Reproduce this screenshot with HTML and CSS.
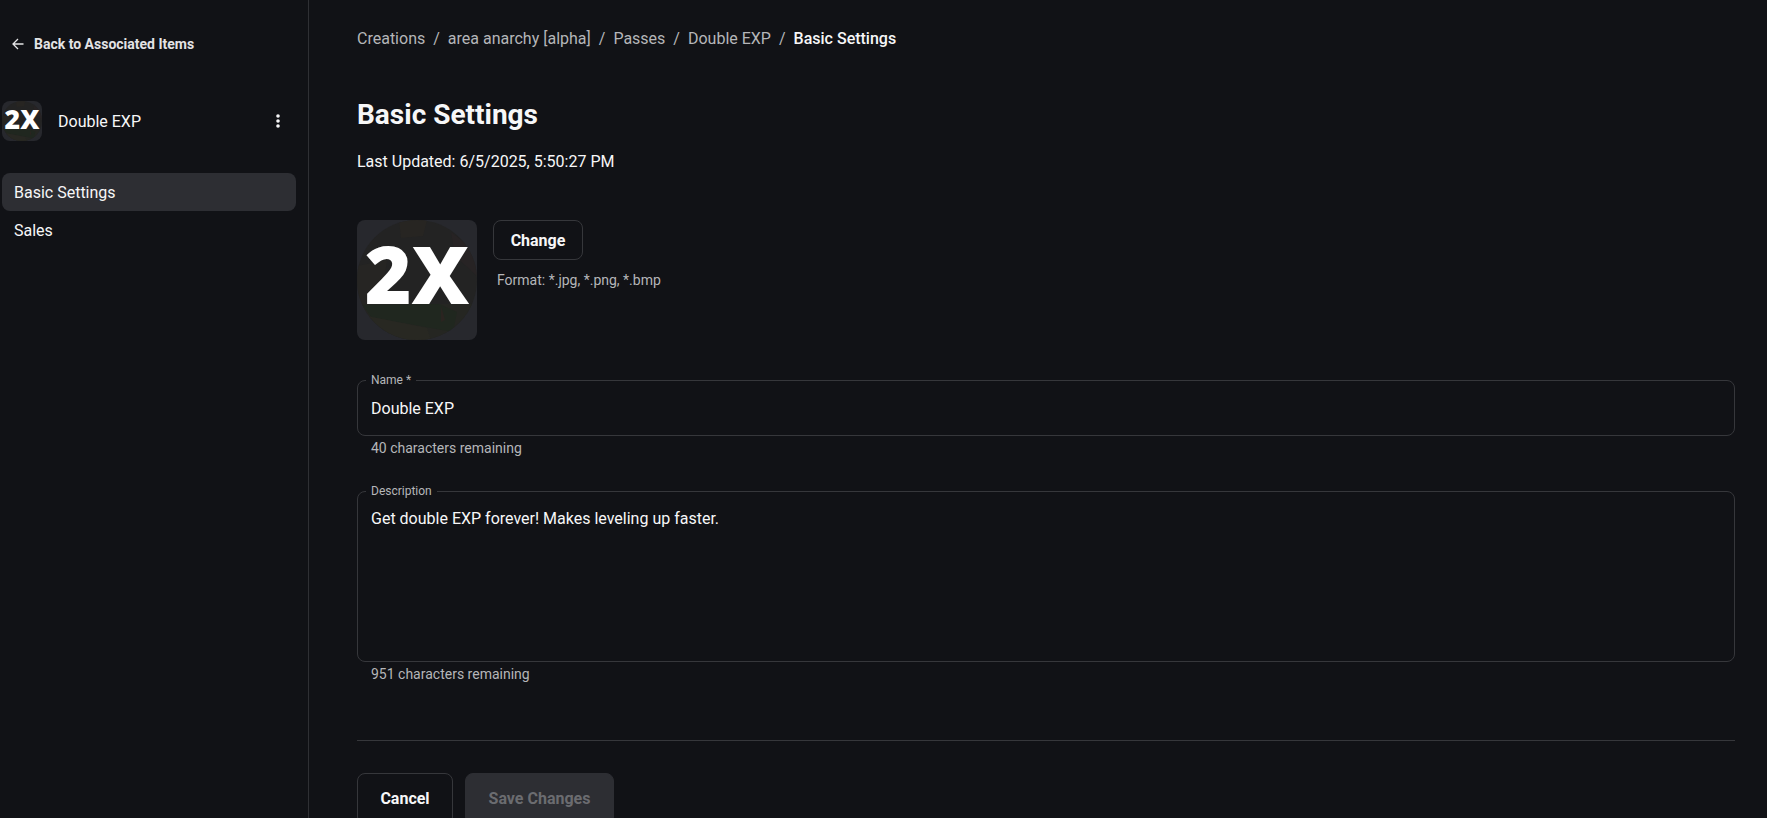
FILE: index.html
```html
<!DOCTYPE html>
<html lang="en">
<head>
<meta charset="utf-8">
<meta name="viewport" content="width=device-width, initial-scale=1">
<title>Basic Settings</title>
<link rel="stylesheet" href="styles.css">
</head>
<body>
<svg class="defs" aria-hidden="true">
  <symbol id="pass-art" viewBox="0 0 120 120">
    <rect width="120" height="120" fill="#27282d"/>
    <clipPath id="disc"><circle cx="60" cy="60" r="60"/></clipPath>
    <g clip-path="url(#disc)">
      <rect width="120" height="120" fill="#232323"/>
      <path d="M0 46 30 40 24 84 0 90Z" fill="#262523"/>
      <path d="M42 0h28l-4 16-22 2z" fill="#272522"/>
      <path d="M94 12l26 20v24l-22-20z" fill="#272324"/>
      <path d="M0 84h120v36H0z" fill="#252622"/>
      <path d="M6 85 82 84 100 92 96 112 14 97z" fill="#20271f"/>
      <path d="M10 96 70 108 74 120H20z" fill="#282822"/>
      <path d="M84 86 88 100 84 102z" fill="#2a2420"/>
    </g>
  </symbol>
</svg>
<div class="layout">
  <aside class="sidebar">
    <a class="back" href="#">
      <svg class="back-icon" viewBox="0 0 12 12" aria-hidden="true"><path d="M11.500 6H1M6 1 1 6l5 5" fill="none" stroke="currentColor" stroke-width="1.300"/></svg>
      Back to Associated Items
    </a>
    <div class="item">
      <svg class="thumb-small" viewBox="0 0 120 120" role="img" aria-label="Double EXP pass"><use href="#pass-art"/><text class="art-text" x="60" y="84">2X</text></svg>
      <span class="item-name">Double EXP</span>
      <button class="more" type="button" aria-label="More options">
        <svg viewBox="0 0 20 20" aria-hidden="true"><g fill="currentColor"><circle cx="10" cy="5" r="1.800"/><circle cx="10" cy="10" r="1.800"/><circle cx="10" cy="15" r="1.800"/></g></svg>
      </button>
    </div>
    <nav class="nav">
      <a class="nav-link active" href="#" aria-current="page">Basic Settings</a>
      <a class="nav-link" href="#">Sales</a>
    </nav>
  </aside>
  <main class="main">
    <nav class="crumbs" aria-label="Breadcrumb">
      <a href="#">Creations</a><span>/</span><a href="#">area anarchy [alpha]</a><span>/</span><a href="#">Passes</a><span>/</span><a href="#">Double EXP</a><span>/</span><strong>Basic Settings</strong>
    </nav>
    <h1 class="title">Basic Settings</h1>
    <p class="updated">Last Updated: 6/5/2025, 5:50:27 PM</p>
    <form>
      <div class="image-row">
        <svg class="thumb" viewBox="0 0 120 120" role="img" aria-label="Pass image"><use href="#pass-art"/><text class="art-text" x="60" y="84">2X</text></svg>
        <div class="image-actions">
          <button class="btn change" type="button">Change</button>
          <p class="format">Format: *.jpg, *.png, *.bmp</p>
        </div>
      </div>
      <div class="field">
        <label class="label" for="name">Name *</label>
        <input class="control" id="name" type="text" value="Double EXP">
        <p class="helper">40 characters remaining</p>
      </div>
      <div class="field">
        <label class="label" for="description">Description</label>
        <textarea class="control area" id="description" rows="6">Get double EXP forever! Makes leveling up faster.</textarea>
        <p class="helper">951 characters remaining</p>
      </div>
      <div class="actions">
        <button class="btn large" type="button">Cancel</button>
        <button class="btn large save" type="submit" disabled>Save Changes</button>
      </div>
    </form>
  </main>
</div>
</body>
</html>
```
FILE: styles.css
```css
* { box-sizing: border-box; }
html { scrollbar-width: none; background: #111216; }
body {
  margin: 0;
  background: #111216;
  color: #f7f7f8;
  font: 16px/24px Roboto, "Noto Sans", sans-serif;
}
a { color: inherit; text-decoration: none; }
p, h1 { margin: 0; }
button, input, textarea { font: inherit; color: inherit; }
.defs { position: absolute; width: 0; height: 0; }
.art-text { font: 800 80px "Open Sans", sans-serif; fill: #fff; text-anchor: middle; }

.layout { display: flex; min-height: 100vh; }
.sidebar {
  flex: 0 0 309px;
  padding: 32px 12px 0 2px;
  border-right: 1px solid #2f3034;
}
.back {
  display: flex;
  align-items: center;
  gap: 10px;
  padding-left: 10px;
  font-size: 14px;
  font-weight: 700;
  color: #e3e3e5;
}
.back-icon { width: 12px; height: 12px; }
.item { display: flex; align-items: center; gap: 16px; margin-top: 45px; }
.thumb-small { width: 40px; height: 40px; border-radius: 8px; }
.item-name { flex: 1; padding-top: 2px; }
.more { width: 36px; height: 36px; padding: 8px; border: 0; background: none; }
.more svg { display: block; width: 20px; height: 20px; }
.nav { margin-top: 32px; }
.nav-link { display: block; padding: 8px 12px 6px; border-radius: 8px; }
.active { background: #2d2e33; }

.main { flex: 1; min-width: 0; padding: 27px 32px 32px 48px; }
.crumbs { display: flex; flex-wrap: wrap; gap: 8px; color: #b5b6b9; }
.crumbs strong { font-weight: 500; color: #f7f7f8; }
.title { margin-top: 46px; font-size: 28px; line-height: 36px; font-weight: 700; }
.updated { margin-top: 17px; }
.image-row { display: flex; gap: 16px; margin-top: 46px; }
.thumb { width: 120px; height: 120px; border-radius: 8px; }
.btn {
  border: 1px solid #36373b;
  border-radius: 8px;
  background: none;
  font-weight: 700;
}
.change { min-width: 90px; height: 40px; padding: 2px 15px 0; }
.format { margin: 8px 0 0 4px; font-size: 14px; color: #b5b6b9; }
.field { position: relative; margin-top: 40px; }
.field + .field { margin-top: 31px; }
.label {
  position: absolute;
  top: -8px;
  left: 9px;
  padding: 0 5px;
  background: #111216;
  font-size: 12px;
  line-height: 16px;
  color: #b5b6b9;
}
.control {
  display: block;
  width: 100%;
  height: 56px;
  padding: 0 13px;
  border: 1px solid #36373b;
  border-radius: 8px;
  background: none;
  outline: none;
}
.area { height: 171px; padding-top: 15px; resize: none; }
.helper { padding-left: 14px; font-size: 14px; color: #b5b6b9; }
.actions {
  display: flex;
  gap: 12px;
  margin-top: 54px;
  padding-top: 32px;
  border-top: 1px solid #36373b;
}
.large { min-width: 96px; height: 52px; padding: 0 22px; }
.save { min-width: 149px; background: #2d2e33; border-color: #2d2e33; color: #6b6c70; }
```
